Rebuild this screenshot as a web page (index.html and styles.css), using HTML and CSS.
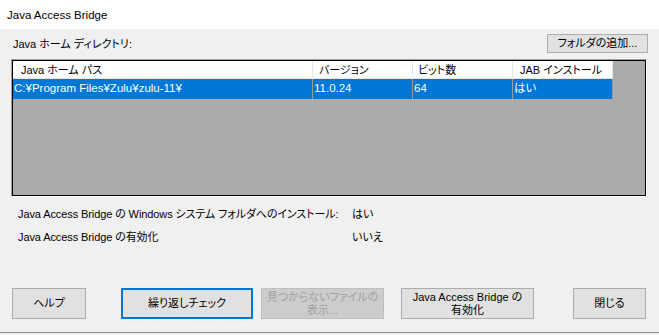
FILE: index.html
```html
<!DOCTYPE html>
<html lang="ja">
<head>
<meta charset="utf-8">
<link rel="stylesheet" href="styles.css">
</head>
<body>
<div class="window">
  <div class="titlebar">Java Access Bridge</div>
  <div class="content">
    <div class="dir-row">
      <span class="dir-label">Java ホーム ディレクトリ:</span>
      <button class="btn btn-add">フォルダの追加...</button>
    </div>
    <div class="listview">
      <div class="row header">
        <div class="cell c1">Java ホーム パス</div>
        <div class="cell c2">バージョン</div>
        <div class="cell c3">ビット数</div>
        <div class="cell c4">JAB インストール</div>
      </div>
      <div class="row selected">
        <div class="cell c1">C:¥Program Files¥Zulu¥zulu-11¥</div>
        <div class="cell c2">11.0.24</div>
        <div class="cell c3">64</div>
        <div class="cell c4">はい</div>
      </div>
    </div>
    <div class="info">
      <span class="info-label">Java Access Bridge の Windows システム フォルダへのインストール:</span>
      <span>はい</span>
      <span class="info-label">Java Access Bridge の有効化</span>
      <span>いいえ</span>
    </div>
    <div class="buttons">
      <button class="btn btn-help">ヘルプ</button>
      <button class="btn btn-recheck">繰り返しチェック</button>
      <button class="btn btn-missing" disabled>見つからないファイルの<br>表示...</button>
      <button class="btn btn-enable">Java Access Bridge の<br>有効化</button>
      <button class="btn btn-close">閉じる</button>
    </div>
  </div>
</div>
</body>
</html>
```

FILE: styles.css
```css
html, body {
  margin: 0;
  padding: 0;
  background: #f0f0f0;
}

body {
  font-family: "Liberation Sans", "Noto Sans CJK JP", sans-serif;
  font-size: 11px;
  font-feature-settings: "palt";
  color: #000;
}

.window {
  width: 659px;
  height: 332px;
  border-bottom: 1px solid #8a8a8a;
  display: flex;
  flex-direction: column;
}

.titlebar {
  height: 29px;
  line-height: 30px;
  background: #fff;
  padding-left: 7px;
  font-size: 11.5px;
}

.content {
  flex: 1;
  display: flex;
  flex-direction: column;
  padding: 5px 12px 0 11px;
}

.dir-row {
  display: flex;
  align-items: center;
  justify-content: space-between;
  height: 18px;
}

.dir-label {
  padding-left: 2px;
}

.btn {
  font-family: inherit;
  font-size: 11px;
  font-feature-settings: "palt";
  color: #000;
  background: #e1e1e1;
  border: 1px solid #adadad;
  padding: 0;
  margin: 0;
  line-height: 13px;
  white-space: nowrap;
}

.btn-add {
  width: 101px;
  height: 19px;
  margin-right: -1px;
}

.listview {
  margin-top: 7px;
  height: 138px;
  flex: none;
  box-sizing: border-box;
  background: #ababab;
  border-top: 1px solid #a0a0a0;
  border-left: 1px solid #a0a0a0;
  border-right: 1px solid #fff;
  border-bottom: 1px solid #fff;
  box-shadow: inset 1px 1px 0 #000, inset -1px -1px 0 #000;
  padding: 1px 0 0 1px;
}

.row {
  display: flex;
  width: 600px;
}

.cell {
  box-sizing: border-box;
  border-right: 1px solid #e5e5e5;
  white-space: nowrap;
  overflow: hidden;
}

.c1 { width: 300px; }
.c2, .c3, .c4 { width: 100px; }

.header {
  height: 18px;
  line-height: 18px;
  background: #fff;
  border-bottom: 1px solid #e5e5e5;
  box-sizing: border-box;
}

.header .c1 { padding-left: 8px; }
.header .c2 { padding-left: 6px; }
.header .c3 { padding-left: 5px; }
.header .c4 { padding-left: 7px; }

.selected {
  height: 20px;
  line-height: 19px;
  background: #0078d7;
  color: #fff;
  font-size: 11.5px;
}

.selected .cell {
  border-right-color: #9a9a9a;
  padding-left: 1px;
}

.info {
  display: grid;
  grid-template-columns: 334px auto;
  row-gap: 7px;
  line-height: 16px;
  margin-top: 9px;
  padding-left: 7px;
}

.info-label {
  white-space: nowrap;
  letter-spacing: -0.1px;
}

.buttons {
  display: flex;
  align-items: stretch;
  margin-top: 43px;
  height: 31px;
  flex: none;
}

.btn-help { width: 74px; margin-left: 1px; }
.btn-recheck {
  width: 132px;
  margin-left: 35px;
  border: 2px solid #0078d7;
}
.btn-missing {
  width: 123px;
  margin-left: 8px;
  background: #cccccc;
  border-color: #bfbfbf;
  color: #a0a0a0;
}
.btn-enable { width: 133px; margin-left: 17px; }
.btn-close { width: 73px; margin-left: 39px; }
```
